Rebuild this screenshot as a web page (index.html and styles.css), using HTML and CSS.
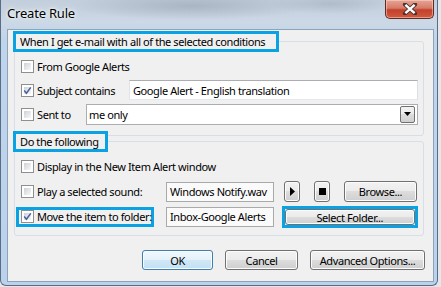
FILE: index.html
```html
<!DOCTYPE html>
<html lang="en">
<head>
  <meta charset="utf-8">
  <title>Create Rule</title>
  <link rel="stylesheet" href="styles.css">
</head>
<body>
  <div class="window">
    <!-- Title bar -->
    <div class="titlebar">
      <span class="title">Create Rule</span>
      <button class="close" aria-label="Close">
        <svg width="16" height="12" viewBox="0 0 16 12">
          <path d="M3 1.5 L13 10.5 M13 1.5 L3 10.5" stroke="#4a3430" stroke-width="4.2" stroke-linecap="round"/>
          <path d="M3.4 1.9 L12.6 10.1 M12.6 1.9 L3.4 10.1" stroke="#fff" stroke-width="2.4"/>
        </svg>
      </button>
    </div>

    <div class="client">
      <!-- Conditions -->
      <fieldset class="group group-conditions">
        <legend class="mark legend-conditions">When I get e-mail with all of the selected conditions</legend>
        <div class="row">
          <label class="check"><span class="box"></span>From Google Alerts</label>
        </div>
        <div class="row">
          <label class="check check-subject"><span class="box checked"><svg viewBox="0 0 11 11"><path d="M2.2 5.6 L4.4 8.2 L8.8 2.4" fill="none" stroke="#4a5f9c" stroke-width="1.5"/></svg></span>Subject contains</label>
          <div class="field field-subject">Google Alert - English translation</div>
        </div>
        <div class="row">
          <label class="check check-sent"><span class="box"></span>Sent to</label>
          <div class="field select">
            <span class="value">me only</span>
            <span class="drop"><svg width="7" height="4" viewBox="0 0 7 4"><path d="M0 0 H7 L3.5 4 Z" fill="#000"/></svg></span>
          </div>
        </div>
      </fieldset>

      <!-- Actions -->
      <fieldset class="group group-actions">
        <legend class="mark legend-actions">Do the following</legend>
        <div class="row">
          <label class="check"><span class="box"></span>Display in the New Item Alert window</label>
        </div>
        <div class="row">
          <label class="check check-action"><span class="box"></span>Play a selected sound:</label>
          <div class="field field-small">Windows Notify.wav</div>
          <button class="btn btn-icon btn-play"><svg width="5" height="9" viewBox="0 0 5 9"><path d="M0 0 L5 4.5 L0 9 Z" fill="#000"/></svg></button>
          <button class="btn btn-icon btn-stop"><svg width="7" height="7" viewBox="0 0 7 7"><rect width="7" height="7" fill="#000"/></svg></button>
          <button class="btn btn-browse">Browse...</button>
        </div>
        <div class="row">
          <span class="mark mark-move">
            <label class="check"><span class="box checked"><svg viewBox="0 0 11 11"><path d="M2.2 5.6 L4.4 8.2 L8.8 2.4" fill="none" stroke="#4a5f9c" stroke-width="1.5"/></svg></span>Move the item to folder:</label>
          </span>
          <div class="field field-small">Inbox-Google Alerts</div>
          <span class="mark mark-folder"><button class="btn btn-folder">Select Folder...</button></span>
        </div>
      </fieldset>

      <!-- Dialog buttons -->
      <div class="actions">
        <button class="btn btn-default btn-ok">OK</button>
        <button class="btn btn-cancel">Cancel</button>
        <button class="btn btn-advanced">Advanced Options...</button>
      </div>
    </div>
  </div>
</body>
</html>
```

FILE: styles.css
```css
* {
  box-sizing: border-box;
}

body {
  margin: 0;
  width: 441px;
  height: 287px;
  overflow: hidden;
  background: #e4e6e9;
  font-family: "Noto Sans", sans-serif;
  font-size: 11px;
  letter-spacing: -0.4px;
  color: #000;
}

.window {
  width: 438px;
  height: 286px;
  display: flex;
  flex-direction: column;
  padding: 0 3px 3px 6px;
  border: 1px solid #5a6d85;
  border-top: none;
  border-radius: 0 0 6px 6px;
  background:
    radial-gradient(ellipse 120px 14px at 190px 6px, rgba(120, 130, 145, 0.35), transparent),
    radial-gradient(ellipse 60px 10px at 330px 4px, rgba(120, 130, 145, 0.25), transparent),
    linear-gradient(180deg, #c2cedb 0px, #ccd8e5 22px, #bfd5ec 40px, #bad2ec 100%);
}

/* Title bar */
.titlebar {
  height: 29px;
  display: flex;
  justify-content: space-between;
  align-items: flex-start;
}

.title {
  margin-top: 5px;
  font-size: 13px;
  line-height: 17px;
  letter-spacing: -0.2px;
  text-shadow: 0 0 6px #fff, 0 0 3px #fff;
}

.close {
  width: 49px;
  height: 19px;
  padding: 0;
  display: flex;
  align-items: center;
  justify-content: center;
  border: 1px solid #5d2c25;
  border-top: none;
  border-radius: 0 0 5px 5px;
  background: linear-gradient(180deg, #e5a595 0%, #d77a68 45%, #c4402c 55%, #cf5a3e 100%);
  box-shadow: inset 0 0 0 1px rgba(255, 220, 210, 0.5);
}

/* Client area */
.client {
  flex: 1;
  background: #f0f0f0;
  border: 1px solid #8fa2b9;
}

.group {
  margin: 1px 9px 0 6px;
  padding: 2px 5px 9px 6px;
  border: 1px solid #d5dfe5;
  border-radius: 3px;
  min-width: 0;
}

.group-actions {
  margin-top: -5px;
  padding-bottom: 6px;
}

.mark {
  border: 3px solid #0aa2e2;
}

legend.mark {
  margin-left: -8px;
  padding: 0 4px;
  height: 21px;
  line-height: 15px;
  background: #f0f0f0;
  white-space: nowrap;
}

.legend-conditions {
  width: 266px;
}

.legend-actions {
  width: 95px;
}

.row {
  height: 24px;
  display: flex;
  align-items: center;
}

.group-actions .row {
  height: 25px;
}

.check {
  display: flex;
  align-items: center;
  flex: none;
  white-space: nowrap;
}

.check-subject {
  width: 108px;
}

.check-sent {
  width: 65px;
}

.check-action {
  width: 145px;
}

.box {
  width: 13px;
  height: 13px;
  margin-right: 3px;
  padding: 2px;
  flex: none;
  border: 1px solid #8e8f8f;
  background: linear-gradient(135deg, #cdd2d8, #f8f8f8) content-box, #fff;
}

.box svg {
  display: block;
  width: 11px;
  height: 11px;
  margin: -2px;
}

.field {
  height: 20px;
  padding: 0 3px;
  display: flex;
  align-items: center;
  border: 1px solid #abadb3;
  border-color: #abadb3 #dbdfe6 #e3e9ef #e2e3ea;
  background: #fff;
  white-space: nowrap;
}

.field-subject {
  width: 289px;
}

.select {
  width: 332px;
  height: 21px;
  padding: 0 2px 0 2px;
  border-color: #abadb3;
}

.select .value {
  flex: 1;
}

.drop {
  width: 15px;
  height: 17px;
  display: flex;
  align-items: center;
  justify-content: center;
  border: 1px solid #707070;
  border-radius: 2px;
  background: linear-gradient(180deg, #f2f2f2 0%, #ebebeb 50%, #dddddd 50%, #cfcfcf 100%);
}

.field-small {
  width: 108px;
  border-color: #a9a9a9;
  background: #fafafa;
}

.btn {
  height: 21px;
  padding: 0;
  font: inherit;
  letter-spacing: inherit;
  color: #000;
  border: 1px solid #707070;
  border-radius: 3px;
  background: linear-gradient(180deg, #f2f2f2 0%, #ebebeb 50%, #dddddd 50%, #cfcfcf 100%);
  box-shadow: inset 0 0 0 1px #fcfcfc;
}

.btn-icon {
  width: 16px;
  display: flex;
  align-items: center;
  justify-content: center;
}

.btn-play {
  margin-left: 10px;
}

.btn-stop {
  margin-left: 14px;
}

.btn-browse {
  width: 73px;
  margin-left: 14px;
}

.mark-move {
  width: 138px;
  height: 20px;
  margin-left: -5px;
  margin-right: 12px;
  padding-left: 2px;
  display: flex;
  align-items: center;
}

.mark-folder {
  margin-left: 8px;
  width: 137px;
  height: 22px;
  display: flex;
}

.btn-folder {
  width: 100%;
  height: 100%;
}

/* Dialog buttons */
.actions {
  display: flex;
  justify-content: flex-end;
  gap: 12px;
  margin-top: 14px;
  padding-right: 8px;
}

.actions .btn {
  height: 20px;
}

.btn-default {
  border-color: #3c7fb1;
  background: linear-gradient(180deg, #f1f8fd 0%, #e3f1fa 50%, #d0e8f7 50%, #c3e0f3 100%);
}

.btn-ok {
  width: 71px;
}

.btn-cancel {
  width: 73px;
}

.btn-advanced {
  width: 115px;
}
```
